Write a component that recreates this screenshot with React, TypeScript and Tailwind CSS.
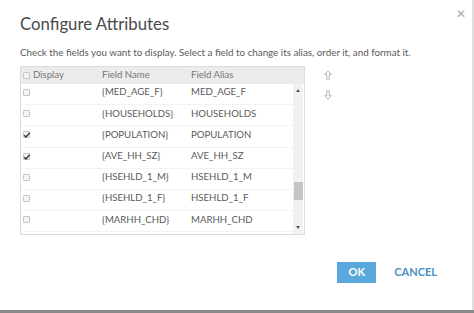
import React from 'react';

const rows = [
  { name: '{MED_AGE_F}', alias: 'MED_AGE_F', checked: false },
  { name: '{HOUSEHOLDS}', alias: 'HOUSEHOLDS', checked: false },
  { name: '{POPULATION}', alias: 'POPULATION', checked: true },
  { name: '{AVE_HH_SZ}', alias: 'AVE_HH_SZ', checked: true },
  { name: '{HSEHLD_1_M}', alias: 'HSEHLD_1_M', checked: false },
  { name: '{HSEHLD_1_F}', alias: 'HSEHLD_1_F', checked: false },
  { name: '{MARHH_CHD}', alias: 'MARHH_CHD', checked: false },
];

function Box({ checked }: { checked: boolean }) {
  return (
    <span className="relative inline-block w-[7px] h-[7px] rounded-[1px] border border-[#c8c8c8] bg-[#f4f4f4]">
      {checked && (
        <svg className="absolute -left-[1px] -top-[1px]" width="8" height="8" viewBox="0 0 8 8">
          <path d="M1.2 4.2 L3 6 L6.8 1.6" fill="none" stroke="#333" strokeWidth="1.4" />
        </svg>
      )}
    </span>
  );
}

function Arrow({ down }: { down?: boolean }) {
  return (
    <svg width="8" height="10" viewBox="0 0 8 10" className={down ? 'rotate-180' : ''}>
      <path d="M4 0.8 L7.3 4.5 L5.3 4.5 L5.3 9.2 L2.7 9.2 L2.7 4.5 L0.7 4.5 Z" fill="none" stroke="#b5b5b5" strokeWidth="1" />
    </svg>
  );
}

export default function App() {
  return (
    <div className="w-[474px] h-[313px] bg-white flex flex-col font-['Lato',sans-serif] text-[#555] overflow-hidden">
      <div className="flex-1 flex border-r-2 border-[#dedede]">
        <div className="flex-1 flex flex-col pl-[20px] relative">
          <span className="absolute right-[6px] top-[8px] text-[12px] text-[#aaa] leading-none">✕</span>
          <h1 className="mt-[12px] text-[16.8px] leading-[24px] text-[#4a4a4a]">Configure Attributes</h1>
          <p className="mt-[9px] text-[9.8px] leading-[14px] text-[#5a5a5a]">
            Check the fields you want to display. Select a field to change its alias, order it, and format it.
          </p>
          <div className="mt-[7px] flex">
            <div className="w-[285px] h-[169px] border border-[#dcdcdc] flex flex-col text-[9.6px]">
              <div className="h-[17px] shrink-0 bg-[#ececec] flex items-center text-[#777]">
                <div className="w-[81px] pl-[2px] flex items-center gap-[3px]">
                  <Box checked={false} />
                  <span>Display</span>
                </div>
                <div className="w-[89px]">Field Name</div>
                <div>Field Alias</div>
              </div>
              <div className="flex-1 flex">
                <div className="flex-1 flex flex-col">
                  {rows.map((r) => (
                    <div key={r.alias} className="h-[21.2px] pb-[3px] flex items-center border-b border-[#f3f3f3] text-[#5a5a5a]">
                      <div className="w-[81px] pl-[2px] flex items-center">
                        <Box checked={r.checked} />
                      </div>
                      <div className="w-[89px]">{r.name}</div>
                      <div>{r.alias}</div>
                    </div>
                  ))}
                </div>
                <div className="w-[10px] bg-[#f1f1f1] flex flex-col items-center justify-between py-[5px] mr-[1px]">
                  <span className="w-0 h-0 border-l-[2.5px] border-r-[2.5px] border-b-[3px] border-l-transparent border-r-transparent border-b-[#555]" />
                  <div className="flex-1 w-full flex flex-col justify-end pb-[26px]">
                    <div className="h-[18px] w-[9px] mx-auto bg-[#c4c4c4]" />
                  </div>
                  <span className="w-0 h-0 border-l-[2.5px] border-r-[2.5px] border-t-[3px] border-l-transparent border-r-transparent border-t-[#555]" />
                </div>
              </div>
            </div>
            <div className="ml-[19px] mt-[4px] flex flex-col gap-[10px]">
              <Arrow />
              <Arrow down />
            </div>
          </div>
          <div className="mt-[27px] flex items-center justify-end gap-[18px] pr-[35px]">
            <div className="w-[39px] h-[21px] bg-[#5aa8dc] text-white text-[11px] font-bold flex items-center justify-center">OK</div>
            <span className="text-[11px] font-bold text-[#4b8fc4]">CANCEL</span>
          </div>
        </div>
      </div>
      <div className="h-[3px] bg-[#8a8a8a]" />
    </div>
  );
}
